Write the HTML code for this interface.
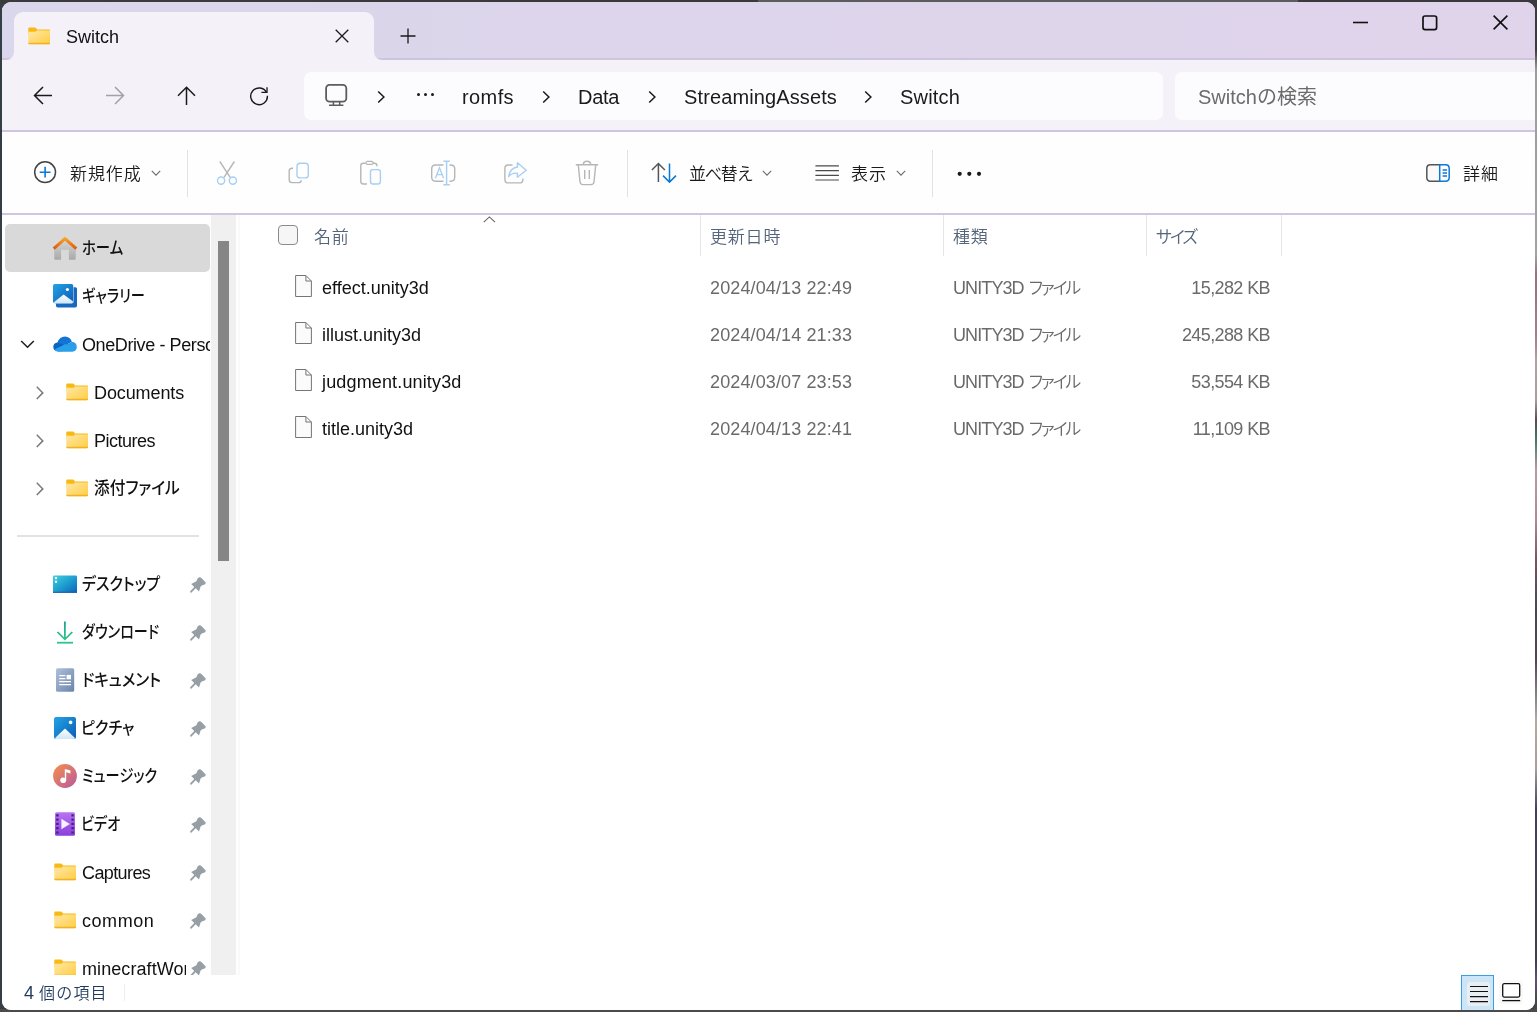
<!DOCTYPE html>
<html lang="ja">
<head>
<meta charset="utf-8">
<title>Switch</title>
<style>
*{box-sizing:border-box;margin:0;padding:0}
html,body{width:1537px;height:1012px;overflow:hidden}
body{background:#3b3b40;font-family:"Liberation Sans","Noto Sans CJK JP",sans-serif;color:#1b1b1b;position:relative}
.abs{position:absolute}
.t{position:absolute;white-space:nowrap;line-height:1}
svg{position:absolute;overflow:visible}
#bgl{left:0;top:0;width:3px;height:1012px;background:#353d45}
#bgt{left:0;top:0;width:1537px;height:3px;background:#3a3a3c}
#bgr{left:1533px;top:0;width:4px;height:1012px;background:linear-gradient(180deg,#3a3a40 0,#3a3a40 50px,#9c9c9c 70px,#a2a2a2 255px,#a06c7a 275px,#a8808a 340px,#b3a0a0 360px,#b09a9c 400px,#5a4a50 420px,#3f7a68 440px,#b89aa0 470px,#b08a94 520px,#7c5264 560px,#45465a 610px,#5a4058 660px,#8a8a90 700px,#b5a8a0 720px,#aa9c98 770px,#6a6a80 790px,#40405a 810px,#3e3e52 960px,#6a4a78 980px,#444 1005px)}
#bgb{left:0;top:1009px;width:1537px;height:3px;background:#4b4b4d}
#win{left:2px;top:2px;width:1533px;height:1008px;border-radius:9px;background:#fff;overflow:hidden}
/* coordinates inside #win are offset by -2,-2; use inner wrapper to keep page coords */
#in{left:-2px;top:-2px;width:1537px;height:1012px;will-change:transform}
#title{left:0;top:0;width:1537px;height:60px;background:linear-gradient(90deg,#dad6eb,#e0d4eb)}
#titleline{left:0;top:58px;width:1537px;height:2px;background:#cec5dd}
#tab{left:14px;top:12px;width:360px;height:48px;background:#f4f1f9;border-radius:9px 9px 0 0}
#nav{left:0;top:60px;width:1537px;height:70px;background:#f4f1f9}
#navline{left:0;top:130px;width:1537px;height:2px;background:#cfc5e0}
#addr{left:304px;top:72px;width:859px;height:48px;border-radius:7px;background:#fcfcfe}
#search{left:1175px;top:72px;width:380px;height:48px;border-radius:7px;background:#fcfcfe}
#tool{left:0;top:132px;width:1537px;height:81px;background:#fefefe}
#toolline{left:0;top:213px;width:1537px;height:2px;background:#d0c6e1}
.vsep{position:absolute;width:1px;top:150px;height:47px;background:#e2e2e2}
#side{left:0;top:215px;width:211px;height:760px;background:#fff}
#sbar{left:211px;top:215px;width:25px;height:760px;background:#f0f0f0}
#thumb{left:218px;top:241px;width:11px;height:320px;background:#868686}
#sel{left:5px;top:224px;width:205px;height:48px;border-radius:5px;background:#d9d9d9}
#sideline{left:17px;top:535px;width:182px;height:2px;background:#e3e3e3}
.ad{font-size:20px;color:#1a1a1a}
.tb{font-size:17px;letter-spacing:0.9px;color:#1a1a1a;font-weight:350}
.sb{font-size:18px;color:#111}
.jp{font-size:17px;font-weight:500;font-feature-settings:"palt";transform-origin:0 50%}
.hd{font-size:17px;letter-spacing:0.8px;color:#54647a;font-weight:350}
.nm{font-size:18px;color:#111}
.jpk{font-size:17px;font-weight:350;font-feature-settings:"palt";letter-spacing:-2.1px}
.gy{font-size:18px;color:#6a6a6a}
.dt{letter-spacing:0.12px}
.sz{letter-spacing:-0.6px}
.csep{position:absolute;width:1px;top:215px;height:41px;background:#e6e6e6}
#status{left:0;top:975px;width:1537px;height:37px;background:#fff}
</style>
</head>
<body>
<div class="abs" id="bgl"></div><div class="abs" id="bgt"></div><div class="abs" id="bgr"></div><div class="abs" id="bgb"></div>
<div class="abs" style="left:758px;top:0;width:540px;height:2px;background:#5c5c5e"></div>
<div class="abs" id="win"><div class="abs" id="in">

<!-- TITLE BAR -->
<div class="abs" id="title"></div>
<div class="abs" id="titleline"></div>
<div class="abs" id="tab"></div>

<svg id="tabcurveL" style="left:6px;top:52px" width="8" height="8" viewBox="0 0 8 8"><path d="M8 0 V8 H0 A8 8 0 0 0 8 0Z" fill="#f4f1f9"/></svg>
<svg id="tabcurveR" style="left:374px;top:52px" width="8" height="8" viewBox="0 0 8 8"><path d="M0 0 V8 H8 A8 8 0 0 1 0 0Z" fill="#f4f1f9"/></svg>
<svg id="tabfolder" style="left:28px;top:27px" width="23" height="18" viewBox="0 0 23 18"><use href="#folder"/></svg>
<div class="t" id="tabtxt" style="left:66px;top:28px;font-size:18px;color:#111">Switch</div>
<svg id="tabx" style="left:335px;top:29px" width="14" height="14" viewBox="0 0 14 14"><path d="M0.7 0.7 L13.3 13.3 M13.3 0.7 L0.7 13.3" stroke="#1a1a1a" stroke-width="1.3" fill="none"/></svg>
<svg id="tabplus" style="left:400px;top:28px" width="16" height="16" viewBox="0 0 16 16"><path d="M8 0.5 V15.5 M0.5 8 H15.5" stroke="#1a1a1a" stroke-width="1.3" fill="none"/></svg>
<svg id="wmin" style="left:1353px;top:21px" width="15" height="3" viewBox="0 0 15 3"><path d="M0 1.5 H15" stroke="#111" stroke-width="1.6"/></svg>
<svg id="wmax" style="left:1422px;top:15px" width="16" height="16" viewBox="0 0 16 16"><rect x="1" y="1" width="13.6" height="13.6" rx="2" fill="none" stroke="#111" stroke-width="1.7"/></svg>
<svg id="wclose" style="left:1493px;top:15px" width="15" height="15" viewBox="0 0 15 15"><path d="M0.6 0.6 L14.4 14.4 M14.4 0.6 L0.6 14.4" stroke="#111" stroke-width="1.6" fill="none"/></svg>


<!-- NAV BAR -->
<div class="abs" id="nav"></div>
<div class="abs" id="navline"></div>
<div class="abs" id="addr"></div>
<div class="abs" id="search"></div>

<svg id="nback" style="left:33px;top:86px" width="20" height="20" viewBox="0 0 20 20"><path d="M10 1 L1.5 9.5 L10 18 M1.8 9.5 H19" stroke="#1a1a1a" stroke-width="1.5" fill="none"/></svg>
<svg id="nfwd" style="left:105px;top:86px" width="20" height="20" viewBox="0 0 20 20"><path d="M10 1 L18.5 9.5 L10 18 M18.2 9.5 H1" stroke="#a3a1a6" stroke-width="1.5" fill="none"/></svg>
<svg id="nup" style="left:177px;top:86px" width="20" height="20" viewBox="0 0 20 20"><path d="M1 9.8 L9.5 1.3 L18 9.8 M9.5 1.6 V19" stroke="#1a1a1a" stroke-width="1.5" fill="none"/></svg>
<svg id="nref" style="left:249px;top:85px" width="20" height="21" viewBox="0 0 20 21"><path d="M17.55 7.6 A8.35 8.35 0 1 0 18.4 10.8" stroke="#1a1a1a" stroke-width="1.4" fill="none"/><path d="M12.4 7.3 H18 V2.3" stroke="#1a1a1a" stroke-width="1.3" fill="none"/></svg>
<svg id="nmon" style="left:324px;top:83px" width="24" height="24" viewBox="0 0 24 24"><rect x="2.1" y="1.8" width="20.2" height="16.8" rx="3.4" fill="none" stroke="#5c5c5c" stroke-width="1.8"/><path d="M9.4 18.8 V22 M15.7 18.8 V22 M5 22.3 H19.4" stroke="#5c5c5c" stroke-width="1.5" fill="none"/></svg>
<svg id="ach1" style="left:377px;top:90px" width="9" height="14" viewBox="0 0 9 14"><path d="M1.2 1.5 L6.9 7 L1.2 12.5" stroke="#1a1a1a" stroke-width="1.5" fill="none"/></svg><svg id="ach2" style="left:542px;top:90px" width="9" height="14" viewBox="0 0 9 14"><path d="M1.2 1.5 L6.9 7 L1.2 12.5" stroke="#1a1a1a" stroke-width="1.5" fill="none"/></svg><svg id="ach3" style="left:648px;top:90px" width="9" height="14" viewBox="0 0 9 14"><path d="M1.2 1.5 L6.9 7 L1.2 12.5" stroke="#1a1a1a" stroke-width="1.5" fill="none"/></svg><svg id="ach4" style="left:864px;top:90px" width="9" height="14" viewBox="0 0 9 14"><path d="M1.2 1.5 L6.9 7 L1.2 12.5" stroke="#1a1a1a" stroke-width="1.5" fill="none"/></svg>
<svg id="adots" style="left:416px;top:92px" width="19" height="5" viewBox="0 0 19 5"><circle cx="2.5" cy="2.5" r="1.5" fill="#1a1a1a"/><circle cx="9.5" cy="2.5" r="1.5" fill="#1a1a1a"/><circle cx="16.5" cy="2.5" r="1.5" fill="#1a1a1a"/></svg>
<div class="t ad" id="a1" style="left:462px;top:86.5px;letter-spacing:0.4px">romfs</div>
<div class="t ad" id="a2" style="left:578px;top:86.5px;letter-spacing:-0.3px">Data</div>
<div class="t ad" id="a3" style="left:684px;top:86.5px;letter-spacing:0.12px">StreamingAssets</div>
<div class="t ad" id="a4" style="left:900px;top:86.5px;letter-spacing:0.18px">Switch</div>
<div class="t ad" id="a5" style="left:1198px;top:86.5px;color:#6b6b6b">Switchの検索</div>


<!-- TOOLBAR -->
<div class="abs" id="tool"></div>
<div class="abs" id="toolline"></div>

<div class="vsep" style="left:187px"></div><div class="vsep" style="left:627px"></div><div class="vsep" style="left:932px"></div>
<svg id="inew" style="left:33px;top:160px" width="24" height="24" viewBox="0 0 24 24"><circle cx="12.1" cy="12.2" r="10.4" fill="none" stroke="#444" stroke-width="1.5"/><path d="M12.1 6.8 V17.6 M6.7 12.2 H17.5" stroke="#0a78d6" stroke-width="1.6" fill="none"/></svg>
<div class="t tb" id="t1" style="left:70px;top:166px">新規作成</div>
<svg id="dch1" style="left:151px;top:170px" width="10" height="7" viewBox="0 0 10 7"><path d="M0.8 0.9 L5 5.1 L9.2 0.9" stroke="#6a6a6a" stroke-width="1.1" fill="none"/></svg>
<svg id="icut" style="left:215px;top:160px" width="24" height="26" viewBox="0 0 24 26"><path d="M4.8 1.5 L15.2 17.3 M19.4 1.5 L9 17.3" stroke="#b6b6b6" stroke-width="1.4" fill="none"/><circle cx="6.1" cy="20.6" r="3.6" fill="none" stroke="#a6cff3" stroke-width="1.4"/><circle cx="17.9" cy="20.6" r="3.6" fill="none" stroke="#a6cff3" stroke-width="1.4"/></svg>
<svg id="icopy" style="left:288px;top:161px" width="23" height="23" viewBox="0 0 23 23"><rect x="9" y="2.3" width="11.3" height="14.6" rx="3.2" fill="none" stroke="#a6cff3" stroke-width="1.4"/><path d="M5 7.2 H4 Q1.2 7.2 1.2 10 V18.8 Q1.2 21.6 4 21.6 H10.5 Q13.3 21.6 13.3 19.2" fill="none" stroke="#b6b6b6" stroke-width="1.4"/></svg>
<svg id="ipaste" style="left:359px;top:160px" width="24" height="26" viewBox="0 0 24 26"><path d="M8 24 H4.2 Q1.8 24 1.8 21.6 V5.6 Q1.8 3.2 4.2 3.2 H6.5 M14 3.2 H15.5 Q17.9 3.2 17.9 5.6 V6.2" fill="none" stroke="#b6b6b6" stroke-width="1.4"/><rect x="6.9" y="1.4" width="7.2" height="3" rx="1.5" fill="none" stroke="#b6b6b6" stroke-width="1.3"/><rect x="11.5" y="9.6" width="9.9" height="14.4" rx="2.4" fill="none" stroke="#a6cff3" stroke-width="1.4"/></svg>
<svg id="iren" style="left:430px;top:160px" width="26" height="26" viewBox="0 0 26 26"><path d="M13.5 5 H5.6 Q1.7 5 1.7 8.9 V17.3 Q1.7 21.2 5.6 21.2 H13.5 M19.5 5 H20.8 Q24.7 5 24.7 8.9 V17.3 Q24.7 21.2 20.8 21.2 H19.5" fill="none" stroke="#b6b6b6" stroke-width="1.4"/><path d="M16.6 1.2 V24.8 M13.4 1.2 H19.8 M13.4 24.8 H19.8" stroke="#a6cff3" stroke-width="1.4" fill="none"/><path d="M5.4 18.3 L9.5 7.8 L13.6 18.3 M6.9 14.7 H12.1" stroke="#a6cff3" stroke-width="1.3" fill="none"/></svg>
<svg id="ishare" style="left:503px;top:161px" width="25" height="24" viewBox="0 0 25 24"><path d="M9.5 4 H5.4 Q1.9 4 1.9 7.5 V18.4 Q1.9 21.9 5.4 21.9 H16.4 Q19.9 21.9 19.9 18.4 V17.4" fill="none" stroke="#b6b6b6" stroke-width="1.4"/><path d="M14.4 1.8 L23.2 9.2 L14.4 16.2 V12.2 Q8.8 11.6 5.6 15.6 Q7 7.2 14.4 6 Z" fill="none" stroke="#a6cff3" stroke-width="1.4" stroke-linejoin="round"/></svg>
<svg id="idel" style="left:575px;top:160px" width="24" height="26" viewBox="0 0 24 26"><path d="M0.8 4.8 H23.2 M8.3 4.6 Q8.3 1.2 12 1.2 Q15.7 1.2 15.7 4.6 M3.3 5.2 L5 21.8 Q5.3 24.6 8 24.6 H16 Q18.7 24.6 19 21.8 L20.7 5.2 M9.7 10 V19 M14.3 10 V19" fill="none" stroke="#b6b6b6" stroke-width="1.4"/></svg>
<svg id="isort" style="left:650px;top:162px" width="28" height="22" viewBox="0 0 28 22"><path d="M1.9 8 L8.4 1.5 L14.9 8 M8.4 1.8 V20" stroke="#555" stroke-width="1.5" fill="none"/><path d="M13 13.6 L19.5 20.1 L26 13.6 M19.5 19.8 V1.5" stroke="#0a78d6" stroke-width="1.5" fill="none"/></svg>
<div class="t tb" id="t2" style="left:689px;top:166px;letter-spacing:-1.1px">並べ替え</div>
<svg id="dch2" style="left:762px;top:170px" width="10" height="7" viewBox="0 0 10 7"><path d="M0.8 0.9 L5 5.1 L9.2 0.9" stroke="#6a6a6a" stroke-width="1.1" fill="none"/></svg>
<svg id="iview" style="left:815px;top:164px" width="24" height="18" viewBox="0 0 24 18"><path d="M0.4 1.9 H23.9 M0.4 6.6 H23.9 M0.4 11.3 H23.9 M0.4 16 H23.9" stroke="#4a4a4a" stroke-width="1.2"/></svg>
<div class="t tb" id="t3" style="left:851px;top:166px">表示</div>
<svg id="dch3" style="left:896px;top:170px" width="10" height="7" viewBox="0 0 10 7"><path d="M0.8 0.9 L5 5.1 L9.2 0.9" stroke="#6a6a6a" stroke-width="1.1" fill="none"/></svg>
<svg id="imore" style="left:957px;top:171px" width="25" height="6" viewBox="0 0 25 6"><circle cx="2.7" cy="2.8" r="2.1" fill="#1a1a1a"/><circle cx="12.3" cy="2.8" r="2.1" fill="#1a1a1a"/><circle cx="22" cy="2.8" r="2.1" fill="#1a1a1a"/></svg>
<svg id="idet" style="left:1425px;top:163px" width="26" height="20" viewBox="0 0 26 20"><path d="M14.7 1.8 H5.5 Q1.8 1.8 1.8 5.5 V14.5 Q1.8 18.2 5.5 18.2 H14.7" fill="#fafafa" stroke="#555" stroke-width="1.5"/><path d="M14.7 1.8 H20.5 Q24.2 1.8 24.2 5.5 V14.5 Q24.2 18.2 20.5 18.2 H14.7 Z" fill="#fff" stroke="#0a78d6" stroke-width="1.5"/><path d="M17.6 7 H22 M17.6 10 H22 M17.6 13 H22" stroke="#0a78d6" stroke-width="1.3"/></svg>
<div class="t tb" id="t4" style="left:1463px;top:166px">詳細</div>


<!-- SIDEBAR -->
<div class="abs" id="side"></div>
<div class="abs" id="sbar"></div>
<div class="abs" id="thumb"></div>
<div class="abs" id="sel"></div>
<div class="abs" id="sideline"></div>

<svg width="0" height="0" style="left:0;top:0"><defs>
<linearGradient id="gFold" x1="0" y1="0" x2="1" y2="1"><stop offset="0" stop-color="#ffe9a6"/><stop offset="1" stop-color="#ffcc44"/></linearGradient>
<linearGradient id="gBlue" x1="0" y1="0" x2="1" y2="1"><stop offset="0" stop-color="#22a4e6"/><stop offset="1" stop-color="#0c5cb4"/></linearGradient>
<linearGradient id="gDesk" x1="0" y1="0" x2="1" y2="1"><stop offset="0" stop-color="#3fd0dc"/><stop offset="0.5" stop-color="#1f9fd0"/><stop offset="1" stop-color="#0e63b6"/></linearGradient>
<linearGradient id="gDoc" x1="0" y1="0" x2="1" y2="1"><stop offset="0" stop-color="#afc1da"/><stop offset="1" stop-color="#6a84ab"/></linearGradient>
<linearGradient id="gMus" x1="0" y1="0" x2="1" y2="1"><stop offset="0" stop-color="#f5914a"/><stop offset="1" stop-color="#b9589f"/></linearGradient>
<linearGradient id="gVid" x1="0" y1="0" x2="0" y2="1"><stop offset="0" stop-color="#b775f2"/><stop offset="1" stop-color="#8a3ed9"/></linearGradient>
<linearGradient id="gRoof" x1="0" y1="0" x2="0" y2="1"><stop offset="0" stop-color="#f6a024"/><stop offset="1" stop-color="#dc5c0c"/></linearGradient>
<linearGradient id="gWall" x1="0" y1="0" x2="0" y2="1"><stop offset="0" stop-color="#d8d8d8"/><stop offset="1" stop-color="#a9a9a9"/></linearGradient>
<linearGradient id="gDl" x1="0" y1="0" x2="0" y2="1"><stop offset="0" stop-color="#0f9a92"/><stop offset="1" stop-color="#2ec48a"/></linearGradient>
<linearGradient id="gWht" x1="0" y1="0" x2="0" y2="1"><stop offset="0" stop-color="#ffffff"/><stop offset="1" stop-color="#cfe6fa"/></linearGradient>
<g id="folder"><path d="M0.3 1.6 Q0.3 0.4 1.5 0.4 H6.6 Q7.6 0.4 8.2 1.2 L9.1 2.4 H21 Q22 2.4 22 3.4 V8 H0.3Z" fill="#f9b914"/><path d="M0.3 4.7 H7.6 L8.8 3.5 H22 V16 Q22 17.2 20.8 17.2 H1.5 Q0.3 17.2 0.3 16Z" fill="url(#gFold)"/><path d="M0.3 15.7 H22 V16.2 Q22 17.2 20.8 17.2 H1.5 Q0.3 17.2 0.3 16.2Z" fill="#efb220"/></g>
<g id="pin"><path d="M9.6 0.2 Q10.4 0.1 11.1 0.8 L15.3 5 Q16.1 5.9 15.3 6.9 Q14.3 7.9 12.7 8.1 L10.6 9.4 L9 14.4 L1.2 7 L6.4 4.3 L7.5 1.7 Q7.9 0.4 9.6 0.2Z" fill="#959fa5"/><path d="M5.4 10.2 L1.1 14.7" stroke="#959fa5" stroke-width="1.9" stroke-linecap="round" fill="none"/></g>
<g id="rchev"><path d="M0.8 0.8 L6.8 6.9 L0.8 13" stroke="#7a7a7a" stroke-width="1.5" fill="none"/></g>
</defs></svg>

<svg id="ihome" style="left:52px;top:236px" width="26" height="25" viewBox="0 0 26 25"><path d="M2.2 13 H9.1 V23.7 H3.4 Q2.2 23.7 2.2 22.5Z M16.9 13 H23.8 V22.5 Q23.8 23.7 22.6 23.7 H16.9Z M4 10 L13 3 L22 10 V13.8 H4Z" fill="url(#gWall)"/><path d="M1.7 12.7 L13 2.7 L24.3 12.7" stroke="url(#gRoof)" stroke-width="3.1" fill="none" stroke-linejoin="round"/></svg>
<div class="t sb jp" id="s1" style="left:82px;top:240px;transform:scaleX(0.845)">ホーム</div>
<svg id="igal" style="left:53px;top:284px" width="25" height="24" viewBox="0 0 25 24"><path d="M3 19 V21.8 Q3 23.6 4.8 23.6 H22.2 Q24 23.6 24 21.8 V5 Q24 3.2 22.4 3.2 H20 V19Z" fill="#1668c0"/><rect x="0" y="0" width="20.6" height="19.6" rx="2" fill="#e8f2fb"/><rect x="0" y="0" width="20.2" height="19.2" rx="1.8" fill="url(#gBlue)"/><path d="M0.6 18.4 L10.6 10.6 L20.2 17.4 V17.6 Q20.2 19.2 18.4 19.2 H1.8 Q0.9 19.2 0.6 18.4Z" fill="url(#gWht)"/><circle cx="14.4" cy="5.5" r="1.6" fill="#fff"/></svg>
<div class="t sb jp" id="s2" style="left:82px;top:288px;transform:scaleX(0.836)">ギャラリー</div>
<svg id="odchev" style="left:20px;top:340px" width="15" height="9" viewBox="0 0 15 9"><path d="M1.2 1 L7.5 7.2 L13.8 1" stroke="#222" stroke-width="1.6" fill="none"/></svg>
<svg id="icloud" style="left:53px;top:336px" width="24" height="16" viewBox="0 0 24 16"><path d="M5.2 15.6 Q0.2 15.2 0.3 10.6 Q0.6 7 4.4 6.4 Q6.6 1.8 11 2.6 L16 9 L9 15.6Z" fill="#0a62c4"/><path d="M4.6 6.4 Q6.4 0.6 12 0.4 Q17.4 0.6 18.8 5.8 L12.5 9.6Z" fill="#1474d4"/><path d="M18.8 5.8 Q23.6 6.4 23.8 10.8 Q23.6 15.2 19.4 15.6 H9 L14 8.6Z" fill="#2d9bea"/><path d="M5.2 15.6 H19.4 Q22.4 15.4 23.4 12.8 L12.6 8 L1.4 13.6 Q2.6 15.4 5.2 15.6Z" fill="#28a0ea"/></svg>
<div class="abs" style="left:82px;top:330px;width:128px;height:30px;overflow:hidden"><div class="t sb" id="s3" style="left:0px;top:6px;letter-spacing:-0.4px">OneDrive - Personal</div></div>
<svg style="left:36px;top:386px" width="8" height="14" viewBox="0 0 8 14"><use href="#rchev"/></svg><svg style="left:66px;top:383px" width="23" height="18" viewBox="0 0 23 18"><use href="#folder"/></svg>
<div class="t sb" id="s4" style="left:94px;top:384px;letter-spacing:-0.1px">Documents</div>
<svg style="left:36px;top:434px" width="8" height="14" viewBox="0 0 8 14"><use href="#rchev"/></svg><svg style="left:66px;top:431px" width="23" height="18" viewBox="0 0 23 18"><use href="#folder"/></svg>
<div class="t sb" id="s5" style="left:94px;top:432px;letter-spacing:-0.5px">Pictures</div>
<svg style="left:36px;top:482px" width="8" height="14" viewBox="0 0 8 14"><use href="#rchev"/></svg><svg style="left:66px;top:479px" width="23" height="18" viewBox="0 0 23 18"><use href="#folder"/></svg>
<div class="t sb jp" id="s6" style="left:94px;top:480px;transform:scaleX(0.924)">添付ファイル</div>

<svg id="idesk" style="left:53px;top:575px" width="24" height="18" viewBox="0 0 24 18"><path d="M1.4 0.4 H22.6 Q24 0.4 24 1.8 V17.6 H0 V1.8 Q0 0.4 1.4 0.4Z" fill="url(#gDesk)"/><rect x="1.9" y="1.9" width="2.2" height="2.2" fill="#e8fbff"/><rect x="1.9" y="5.6" width="2.2" height="2.2" fill="#e8fbff"/><path d="M0 16.8 H24 V17.8 H0Z" fill="#0d58a6"/></svg>
<div class="t sb jp" id="s7" style="left:82px;top:576px;transform:scaleX(0.883)">デスクトップ</div><svg style="left:190px;top:576.5px" width="16" height="16" viewBox="0 0 16 16"><use href="#pin"/></svg>
<svg id="idl" style="left:56px;top:621px" width="18" height="23" viewBox="0 0 18 23"><path d="M8.9 0.6 V18 M1.5 11 L8.9 18.4 L16.3 11" stroke="url(#gDl)" stroke-width="1.7" fill="none"/><path d="M1 21.7 H17" stroke="#2ec48a" stroke-width="1.8"/></svg>
<div class="t sb jp" id="s8" style="left:82px;top:624px;transform:scaleX(0.83)">ダウンロード</div><svg style="left:190px;top:624.5px" width="16" height="16" viewBox="0 0 16 16"><use href="#pin"/></svg>
<svg id="idoc" style="left:56px;top:668px" width="19" height="24" viewBox="0 0 19 24"><rect x="0" y="0.2" width="18.2" height="23.6" rx="1.6" fill="url(#gDoc)"/><path d="M3.2 7.6 H9.4 M3.2 10.6 H9.4 M3.2 13.6 H15 M3.2 16.6 H15" stroke="#fff" stroke-width="1.3"/><rect x="10.6" y="6.9" width="4.4" height="4.4" fill="#fff"/></svg>
<div class="t sb jp" id="s9" style="left:82px;top:672px;transform:scaleX(0.91)">ドキュメント</div><svg style="left:190px;top:672.5px" width="16" height="16" viewBox="0 0 16 16"><use href="#pin"/></svg>
<svg id="ipic" style="left:54px;top:717px" width="22" height="22" viewBox="0 0 22 22"><rect x="0" y="0" width="22" height="22" rx="2" fill="url(#gBlue)"/><path d="M1 21 L11 11.6 L21 21 Q20.6 22 19.6 22 H2.4 Q1.4 22 1 21Z" fill="url(#gWht)"/><circle cx="16.6" cy="5.4" r="1.8" fill="#fff"/></svg>
<div class="t sb jp" id="s10" style="left:81px;top:720px;transform:scaleX(0.883)">ピクチャ</div><svg style="left:190px;top:720.5px" width="16" height="16" viewBox="0 0 16 16"><use href="#pin"/></svg>
<svg id="imus" style="left:53px;top:764px" width="24" height="24" viewBox="0 0 24 24"><circle cx="12" cy="12" r="11.9" fill="url(#gMus)"/><path d="M11.8 5 L17.4 6.6 V9.4 L13.2 8.2 V16.2 A3 2.8 0 1 1 11.8 13.9Z" fill="#fff"/></svg>
<div class="t sb jp" id="s11" style="left:82px;top:768px;transform:scaleX(0.834)">ミュージック</div><svg style="left:190px;top:768.5px" width="16" height="16" viewBox="0 0 16 16"><use href="#pin"/></svg>
<svg id="ivid" style="left:55px;top:812px" width="20" height="24" viewBox="0 0 20 24"><rect x="0" y="0.2" width="20" height="23.6" rx="1.5" fill="url(#gVid)"/><path d="M1.2 2.2 h2.4 v2.2 h-2.4z M1.2 6.5 h2.4 v2.2 h-2.4z M1.2 10.8 h2.4 v2.2 h-2.4z M1.2 15.1 h2.4 v2.2 h-2.4z M1.2 19.4 h2.4 v2.2 h-2.4z M16.4 2.2 h2.4 v2.2 h-2.4z M16.4 6.5 h2.4 v2.2 h-2.4z M16.4 10.8 h2.4 v2.2 h-2.4z M16.4 15.1 h2.4 v2.2 h-2.4z M16.4 19.4 h2.4 v2.2 h-2.4z" fill="#4a1d8a"/><path d="M6.4 6.8 L14.8 12 L6.4 17.2Z" fill="#f6f0ff"/></svg>
<div class="t sb jp" id="s12" style="left:81px;top:816px;transform:scaleX(0.83)">ビデオ</div><svg style="left:190px;top:816.5px" width="16" height="16" viewBox="0 0 16 16"><use href="#pin"/></svg>
<svg style="left:54px;top:863px" width="23" height="18" viewBox="0 0 23 18"><use href="#folder"/></svg>
<div class="t sb" id="s13" style="left:82px;top:864px;letter-spacing:-0.6px">Captures</div><svg style="left:190px;top:864.5px" width="16" height="16" viewBox="0 0 16 16"><use href="#pin"/></svg>
<svg style="left:54px;top:911px" width="23" height="18" viewBox="0 0 23 18"><use href="#folder"/></svg>
<div class="t sb" id="s14" style="left:82px;top:912px;letter-spacing:0.55px">common</div><svg style="left:190px;top:912.5px" width="16" height="16" viewBox="0 0 16 16"><use href="#pin"/></svg>
<svg style="left:54px;top:959px" width="23" height="18" viewBox="0 0 23 18"><use href="#folder"/></svg>
<div class="abs" style="left:82px;top:950px;width:104px;height:26px;overflow:hidden"><div class="t sb" id="s15" style="left:0px;top:10px;letter-spacing:0.08px">minecraftWorlds</div></div><svg style="left:190px;top:960.5px" width="16" height="16" viewBox="0 0 16 16"><use href="#pin"/></svg>


<!-- FILE LIST -->

<div class="csep" style="left:700px"></div><div class="csep" style="left:943px"></div><div class="csep" style="left:1146px"></div><div class="csep" style="left:1281px"></div>
<div class="abs" id="hcheck" style="left:278px;top:225px;width:20px;height:20px;border:1px solid #8a8a8a;border-radius:4px;background:#f6f6f6"></div>
<svg id="hsort" style="left:483px;top:216px" width="13" height="7" viewBox="0 0 13 7"><path d="M0.8 6.2 L6.4 0.9 L12 6.2" stroke="#666" stroke-width="1.1" fill="none"/></svg>
<div class="t hd" id="h1" style="left:314px;top:229px">名前</div>
<div class="t hd" id="h2" style="left:710px;top:229px">更新日時</div>
<div class="t hd" id="h3" style="left:953px;top:229px">種類</div>
<div class="t hd jpk" id="h4" style="left:1156px;top:229px">サイズ</div>
<svg style="left:295px;top:275px" width="17" height="22" viewBox="0 0 17 22"><path d="M0.6 0.5 H10.9 L16.4 6 V21.5 H0.6Z" fill="#fbfbfb" stroke="#757575" stroke-width="1"/><path d="M10.9 0.7 V6 H16.2" fill="none" stroke="#757575" stroke-width="1"/></svg><div class="t nm" id="n0" style="left:322px;top:279px">effect.unity3d</div>
<div class="t gy dt" id="d0" style="left:710px;top:279px">2024/04/13 22:49</div>
<div class="t gy" id="k0" style="left:953px;top:279px"><span style="letter-spacing:-0.9px">UNITY3D</span> <span class="jpk">ファイル</span></div>
<div class="t gy sz" id="z0" style="right:267px;top:279px">15,282 KB</div>
<svg style="left:295px;top:322px" width="17" height="22" viewBox="0 0 17 22"><path d="M0.6 0.5 H10.9 L16.4 6 V21.5 H0.6Z" fill="#fbfbfb" stroke="#757575" stroke-width="1"/><path d="M10.9 0.7 V6 H16.2" fill="none" stroke="#757575" stroke-width="1"/></svg><div class="t nm" id="n1" style="left:322px;top:326px">illust.unity3d</div>
<div class="t gy dt" id="d1" style="left:710px;top:326px">2024/04/14 21:33</div>
<div class="t gy" id="k1" style="left:953px;top:326px"><span style="letter-spacing:-0.9px">UNITY3D</span> <span class="jpk">ファイル</span></div>
<div class="t gy sz" id="z1" style="right:267px;top:326px">245,288 KB</div>
<svg style="left:295px;top:369px" width="17" height="22" viewBox="0 0 17 22"><path d="M0.6 0.5 H10.9 L16.4 6 V21.5 H0.6Z" fill="#fbfbfb" stroke="#757575" stroke-width="1"/><path d="M10.9 0.7 V6 H16.2" fill="none" stroke="#757575" stroke-width="1"/></svg><div class="t nm" id="n2" style="left:322px;top:373px;letter-spacing:0.15px">judgment.unity3d</div>
<div class="t gy dt" id="d2" style="left:710px;top:373px">2024/03/07 23:53</div>
<div class="t gy" id="k2" style="left:953px;top:373px"><span style="letter-spacing:-0.9px">UNITY3D</span> <span class="jpk">ファイル</span></div>
<div class="t gy sz" id="z2" style="right:267px;top:373px">53,554 KB</div>
<svg style="left:295px;top:416px" width="17" height="22" viewBox="0 0 17 22"><path d="M0.6 0.5 H10.9 L16.4 6 V21.5 H0.6Z" fill="#fbfbfb" stroke="#757575" stroke-width="1"/><path d="M10.9 0.7 V6 H16.2" fill="none" stroke="#757575" stroke-width="1"/></svg><div class="t nm" id="n3" style="left:322px;top:420px">title.unity3d</div>
<div class="t gy dt" id="d3" style="left:710px;top:420px">2024/04/13 22:41</div>
<div class="t gy" id="k3" style="left:953px;top:420px"><span style="letter-spacing:-0.9px">UNITY3D</span> <span class="jpk">ファイル</span></div>
<div class="t gy sz" id="z3" style="right:267px;top:420px">11,109 KB</div>


<!-- STATUS BAR -->
<div class="abs" id="status"></div>

<div class="t" id="st" style="left:24px;top:984px;font-size:18px;color:#1f3a5c">4 <span style="font-size:16px;letter-spacing:1.2px;font-weight:350">個の項目</span></div>
<div class="abs" style="left:124px;top:984px;width:1px;height:17px;background:#efefef"></div>
<div class="abs" style="left:238px;top:215px;width:2px;height:760px;background:#fafafa"></div>
<div class="abs" id="vb1" style="left:1461px;top:975px;width:33px;height:36px;background:#cde6f7;border:1px solid #3a9ee0"></div>
<div class="abs" style="left:1467px;top:982px;width:23px;height:24px;background:#e9eef2;border-radius:3px"></div>
<svg id="vi1" style="left:1470px;top:985px" width="18" height="18" viewBox="0 0 18 18"><path d="M0 1.5 H18 M0 6.5 H18 M0 11.6 H18 M0 16.7 H18" stroke="#111" stroke-width="1.2"/></svg>
<div class="abs" style="left:1499px;top:980px;width:24px;height:24px;background:#f9f9f9;border-radius:3px"></div>
<svg id="vi2" style="left:1502px;top:983px" width="19" height="19" viewBox="0 0 19 19"><rect x="0.7" y="0.7" width="17" height="13.4" rx="1.5" fill="#fff" stroke="#111" stroke-width="1.3"/><path d="M0.2 17.6 H18.2" stroke="#111" stroke-width="1.3"/></svg>


</div></div>
</body>
</html>
